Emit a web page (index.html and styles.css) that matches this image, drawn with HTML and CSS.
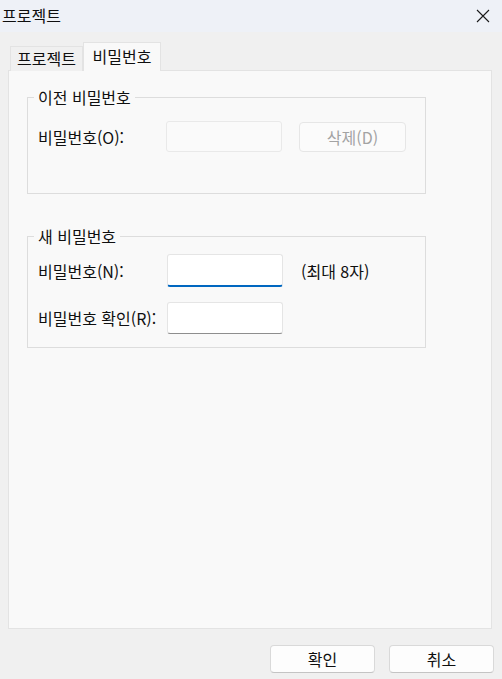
FILE: index.html
```html
<!DOCTYPE html>
<html lang="ko">
<head>
<meta charset="utf-8">
<title>프로젝트</title>
<link rel="stylesheet" href="styles.css">
</head>
<body>
<div class="window">
  <div class="titlebar">
    <span class="title">프로젝트</span>
    <svg class="close" width="14" height="14" viewBox="0 0 14 14"><path d="M1 1L13 13M13 1L1 13" stroke="#1a1a1a" stroke-width="1.1" fill="none"/></svg>
  </div>
  <div class="tabs">
    <div class="tab">프로젝트</div>
    <div class="tab active">비밀번호</div>
  </div>
  <div class="panel">
    <fieldset class="group group-old">
      <legend>이전 비밀번호</legend>
      <div class="row row-first">
        <span class="label">비밀번호(O):</span>
        <input class="field" type="password" disabled>
        <button class="btn-disabled" disabled>삭제(D)</button>
      </div>
    </fieldset>
    <fieldset class="group group-new">
      <legend>새 비밀번호</legend>
      <div class="row row-first">
        <span class="label">비밀번호(N):</span>
        <input class="field focused" type="password">
        <span class="hint">(최대 8자)</span>
      </div>
      <div class="row row-second">
        <span class="label">비밀번호 확인(R):</span>
        <input class="field" type="password">
      </div>
    </fieldset>
  </div>
  <div class="footer">
    <button class="btn">확인</button>
    <button class="btn">취소</button>
  </div>
</div>
</body>
</html>
```
FILE: styles.css
```css
html, body {
  margin: 0;
  padding: 0;
}
body {
  width: 502px;
  height: 679px;
  overflow: hidden;
  background: #f0f0f0;
  font-family: "Noto Sans CJK KR", "Noto Sans", sans-serif;
  font-size: 16px;
  line-height: 20px;
  color: #0f0f0f;
}
.window {
  width: 502px;
  height: 679px;
}
.titlebar {
  height: 32px;
  background: #eef1f7;
  display: flex;
  align-items: center;
  justify-content: space-between;
  padding: 0 12px 0 2px;
  box-sizing: border-box;
}
.title {
  margin-top: -3px;
}
.close {
  display: block;
}
.tabs {
  height: 39px;
  margin-bottom: -1px;
  padding-left: 10px;
  display: flex;
  align-items: flex-end;
  box-sizing: border-box;
}
.tab {
  box-sizing: border-box;
  width: 73px;
  height: 25px;
  border: 1px solid #e3e3e3;
  border-bottom: none;
  background: #f0f0f0;
  text-align: center;
  line-height: 18px;
  padding-top: 2px;
}
.tab.active {
  width: 78px;
  height: 29px;
  background: #f9f9f9;
  position: relative;
  z-index: 1;
  padding-top: 3px;
  line-height: 20px;
}
.panel {
  box-sizing: border-box;
  margin: 0 10px 0 8px;
  height: 559px;
  border: 1px solid #e3e3e3;
  background: #f9f9f9;
  padding: 16px 0 0 18px;
}
.group {
  box-sizing: border-box;
  width: 399px;
  margin: 0;
  padding: 0;
  min-width: 0;
  border: 1px solid #dddddd;
}
.group legend {
  margin-left: 6px;
  padding: 0 4px;
  line-height: 20px;
}
.group-old {
  padding-bottom: 41px;
}
.group-new {
  margin-top: 32px;
  padding-bottom: 13px;
}
.row {
  display: grid;
  grid-template-columns: 128px 116px auto;
  align-items: center;
  margin-left: 10px;
  justify-content: start;
}
.group-new .row {
  grid-template-columns: 129px 116px auto;
}
.group-old .row-first {
  margin-top: 14px;
}
.group-new .row-first {
  margin-top: 8px;
}
.group-new .row-second {
  margin-top: 15px;
}
.field {
  box-sizing: border-box;
  width: 116px;
  height: 32px;
  margin: 0;
  padding: 0 8px;
  border: 1px solid #e5e5e5;
  border-bottom: 1px solid #8e8e8e;
  border-radius: 3px;
  background: #ffffff;
  font: inherit;
  outline: none;
  appearance: none;
}
.field.focused {
  height: 33px;
  border-bottom: 2px solid #0067c0;
}
.field:disabled {
  height: 31px;
  background: #fafafa;
  border: 1px solid #e9e9e9;
}
.btn-disabled {
  box-sizing: border-box;
  width: 107px;
  height: 30px;
  margin: 0 0 0 17px;
  padding: 0;
  border: 1px solid #e6e6e6;
  border-radius: 4px;
  background: #fbfbfb;
  color: #a3a3a3;
  font: inherit;
}
.hint {
  margin-left: 18px;
}
.footer {
  display: flex;
  justify-content: flex-end;
  gap: 14px;
  padding: 16px 8px 0 0;
}
.btn {
  box-sizing: border-box;
  width: 105px;
  height: 28px;
  margin: 0;
  padding: 0;
  border: 1px solid #d9d9d9;
  border-bottom-color: #c4c4c4;
  border-radius: 4px;
  background: #fdfdfd;
  color: #0f0f0f;
  font: inherit;
  line-height: 20px;
}
```
